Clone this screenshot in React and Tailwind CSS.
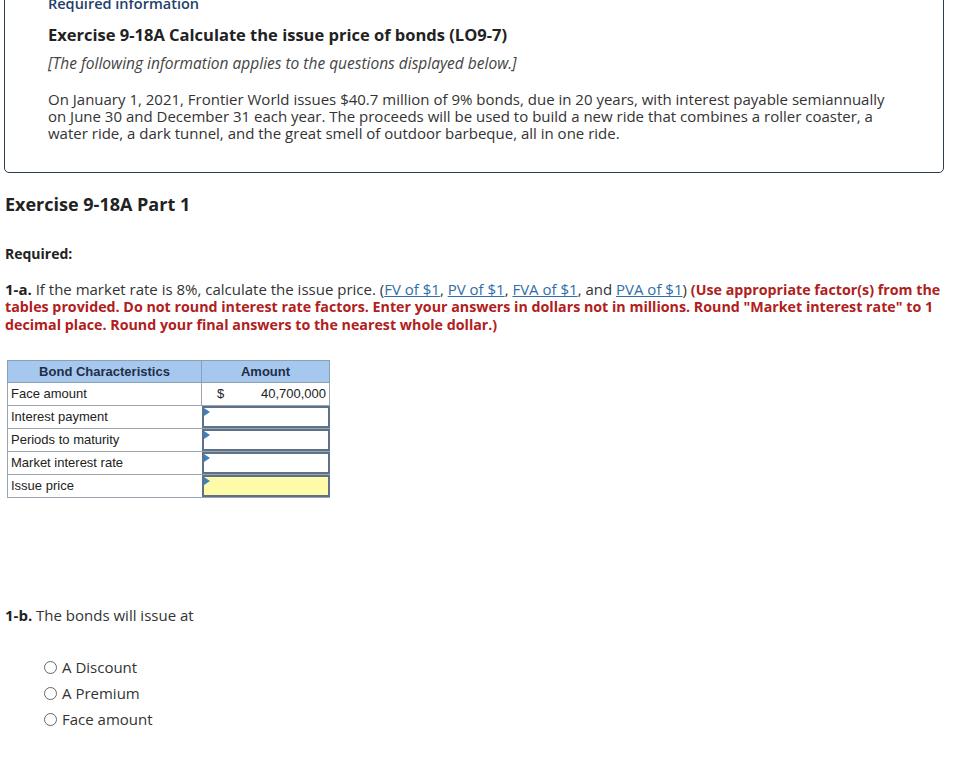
import React from "react";

const body = { fontFamily: "'Open Sans', Lato, sans-serif" };
const arial = { fontFamily: "'Liberation Sans', Arial, sans-serif" };

function Tri() {
  return (
    <svg className="absolute left-0 top-0" width="6" height="8" viewBox="0 0 6 8">
      <path d="M0 0 L6 4 L0 8 Z" fill="#3f7fc0" />
    </svg>
  );
}

function Radio({ label }) {
  return (
    <div className="flex items-center gap-[5px] h-[26px]">
      <span className="w-[13px] h-[13px] rounded-full border border-[#666] bg-white" />
      <span className="text-[15px] text-[#333]">{label}</span>
    </div>
  );
}

export default function App() {
  const link = "text-[#2f6ea8] underline";
  const red = "text-[#b0201c] text-[14.25px] font-bold";
  return (
    <div className="w-[962px] h-[765px] bg-white overflow-hidden text-[#333]" style={body}>
      <div className="ml-[4px] w-[940px] mt-[-20px] h-[193px] border border-[#2c3e50] rounded-[5px] pl-[43px] pt-[14px]">
        <div className="text-[14.5px] font-semibold text-[#1f3f6b] leading-[18px]">Required information</div>
        <div className="mt-[12px] text-[16.5px] font-bold text-[#222] leading-[20px]">
          Exercise 9-18A Calculate the issue price of bonds (LO9-7)
        </div>
        <div className="mt-[9px] text-[15.5px] italic text-[#444] leading-[18px]">
          [The following information applies to the questions displayed below.]
        </div>
        <div className="mt-[19px] text-[15px] text-[#333] leading-[17px] whitespace-nowrap">
          On January 1, 2021, Frontier World issues $40.7 million of 9% bonds, due in 20 years, with interest payable semiannually
          <br />
          on June 30 and December 31 each year. The proceeds will be used to build a new ride that combines a roller coaster, a
          <br />
          water ride, a dark tunnel, and the great smell of outdoor barbeque, all in one ride.
        </div>
      </div>

      <div className="ml-[5px] mt-[20px] text-[18px] font-bold text-[#222] leading-[22px]">Exercise 9-18A Part 1</div>

      <div className="ml-[5px] mt-[30px] text-[14px] font-bold text-[#222] leading-[18px]">Required:</div>

      <div className="ml-[5px] mt-[17px] text-[15px] leading-[18px] text-[#333] whitespace-nowrap">
        <div className="h-[18px]">
          <b className="text-[#222]">1-a.</b> If the market rate is 8%, calculate the issue price. (
          <span className={link}>FV of $1</span>, <span className={link}>PV of $1</span>,{" "}
          <span className={link}>FVA of $1</span>, and <span className={link}>PVA of $1</span>){" "}
          <span className={red}>(Use appropriate factor(s) from the</span>
        </div>
        <div className={"h-[18px] " + red}>
          tables provided. Do not round interest rate factors. Enter your answers in dollars not in millions. Round "Market interest rate" to 1
        </div>
        <div className={"h-[18px] " + red}>
          decimal place. Round your final answers to the nearest whole dollar.)
        </div>
      </div>

      <div className="ml-[7px] mt-[26px] w-[323px] text-[13px] text-[#222]" style={arial}>
        <div className="flex h-[23px] bg-[#a6c8ee] border border-[#8aa0b6]">
          <div className="w-[194px] border-r border-[#8aa0b6] flex items-center justify-center font-bold text-[#1e2f45]">
            Bond Characteristics
          </div>
          <div className="flex-1 flex items-center justify-center font-bold text-[#1e2f45]">Amount</div>
        </div>
        <div className="flex h-[23px] border-x border-b border-[#9aa5b0]">
          <div className="w-[194px] border-r border-[#9aa5b0] flex items-center pl-[3px]">Face amount</div>
          <div className="flex-1 flex items-center justify-between pl-[15px] pr-[3px]">
            <span>$</span>
            <span>40,700,000</span>
          </div>
        </div>
        {["Interest payment", "Periods to maturity", "Market interest rate", "Issue price"].map((r, i) => (
          <div key={r} className="flex h-[23px] border-l border-b border-[#9aa5b0]">
            <div className="w-[194px] flex items-center pl-[3px]">{r}</div>
            <div
              className={
                "relative flex-1 border-2 border-[#5d7188] " + (i === 3 ? "bg-[#fdfba8]" : "bg-white")
              }
            >
              <Tri />
            </div>
          </div>
        ))}
      </div>

      <div className="ml-[5px] mt-[108px] text-[15px] leading-[18px] text-[#333]">
        <b className="text-[#222]">1-b.</b> The bonds will issue at
      </div>

      <div className="ml-[44px] mt-[30px]">
        <Radio label="A Discount" />
        <Radio label="A Premium" />
        <Radio label="Face amount" />
      </div>
    </div>
  );
}
